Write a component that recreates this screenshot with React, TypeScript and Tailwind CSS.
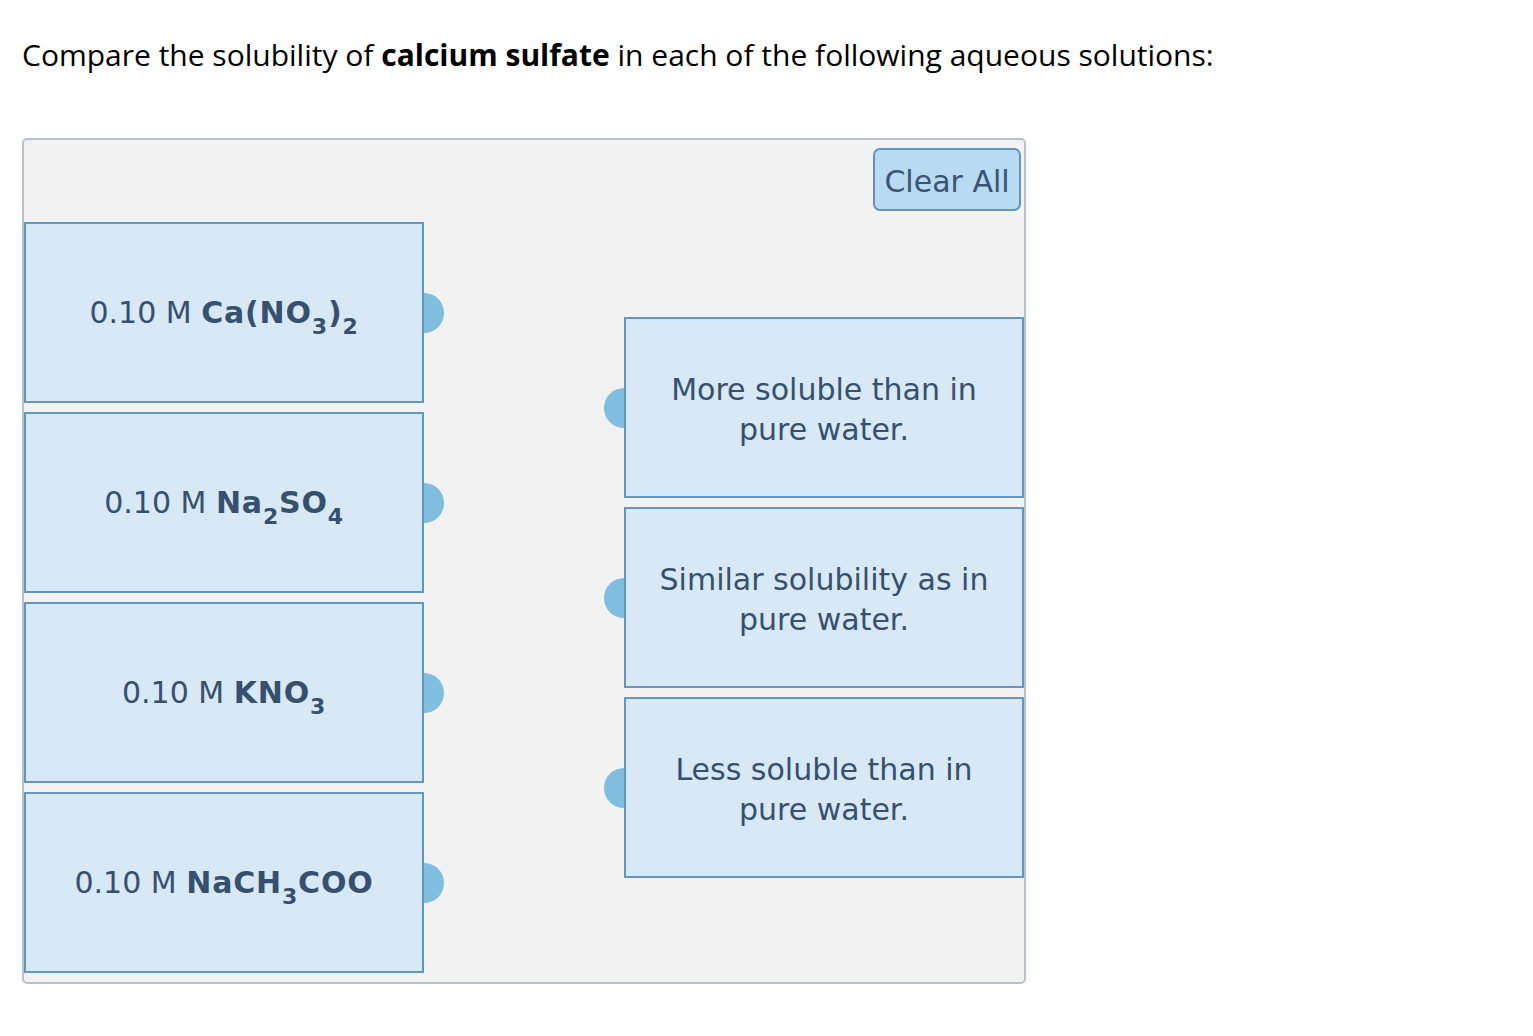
import React from "react";

const boxText = "text-[#36506f] text-[30px] leading-[40px]";
const boxFont = { fontFamily: '"DejaVu Sans", Verdana, sans-serif' };

function Sub({ children }: { children: React.ReactNode }) {
  return <span className="relative top-[11px] text-[22px]">{children}</span>;
}

function Formula({ children }: { children: React.ReactNode }) {
  return <b className="tracking-[0.8px]">{children}</b>;
}

function SourceBox({ children }: { children: React.ReactNode }) {
  return (
    <div className="relative flex h-[181px] w-[400px] items-center justify-center border-2 border-[#6396be] bg-[#d7e9f7]">
      <div className={`${boxText} mt-[4px]`} style={boxFont}>
        {children}
      </div>
      <div className="absolute right-[-22px] top-1/2 h-[40px] w-[20px] -translate-y-1/2 rounded-r-full bg-[#80bedf]" />
    </div>
  );
}

function TargetBox({ children }: { children: React.ReactNode }) {
  return (
    <div className="relative flex h-[181px] w-[400px] items-center justify-center border-2 border-[#6396be] bg-[#d7e9f7]">
      <div className={`${boxText} mt-[4px] text-center`} style={boxFont}>
        {children}
      </div>
      <div className="absolute left-[-22px] top-1/2 h-[40px] w-[20px] -translate-y-1/2 rounded-l-full bg-[#80bedf]" />
    </div>
  );
}

export default function App() {
  return (
    <div className="min-h-screen bg-white pl-[22px] pt-[35px]">
      <p
        className="text-[30px] leading-[40px] text-black"
        style={{ fontFamily: '"Open Sans", sans-serif' }}
      >
        Compare the solubility of <b className="font-bold">calcium sulfate</b> in each of the following aqueous solutions:
      </p>

      <div className="mt-[63px] w-[1004px] rounded-[5px] border-2 border-[#b8c1cc] bg-[#f2f2f2]">
        <div className="flex justify-end pr-[3px] pt-[8px]">
          <button
            className="h-[63px] w-[148px] rounded-[7px] border-2 border-[#6393bd] bg-[#b7dbf3] pt-[3px] text-[30px] text-[#3a5475]"
            style={boxFont}
          >
            Clear All
          </button>
        </div>

        <div className="flex justify-between pb-[9px]">
          <div className="mt-[11px] flex flex-col gap-[9px]">
            <SourceBox>
              0.10 M <Formula>Ca(NO<Sub>3</Sub>)<Sub>2</Sub></Formula>
            </SourceBox>
            <SourceBox>
              0.10 M <Formula>Na<Sub>2</Sub>SO<Sub>4</Sub></Formula>
            </SourceBox>
            <SourceBox>
              0.10 M <Formula>KNO<Sub>3</Sub></Formula>
            </SourceBox>
            <SourceBox>
              0.10 M <Formula>NaCH<Sub>3</Sub>COO</Formula>
            </SourceBox>
          </div>

          <div className="mt-[106px] flex flex-col gap-[9px]">
            <TargetBox>
              More soluble than in
              <br />
              pure water.
            </TargetBox>
            <TargetBox>
              Similar solubility as in
              <br />
              pure water.
            </TargetBox>
            <TargetBox>
              Less soluble than in
              <br />
              pure water.
            </TargetBox>
          </div>
        </div>
      </div>
    </div>
  );
}
